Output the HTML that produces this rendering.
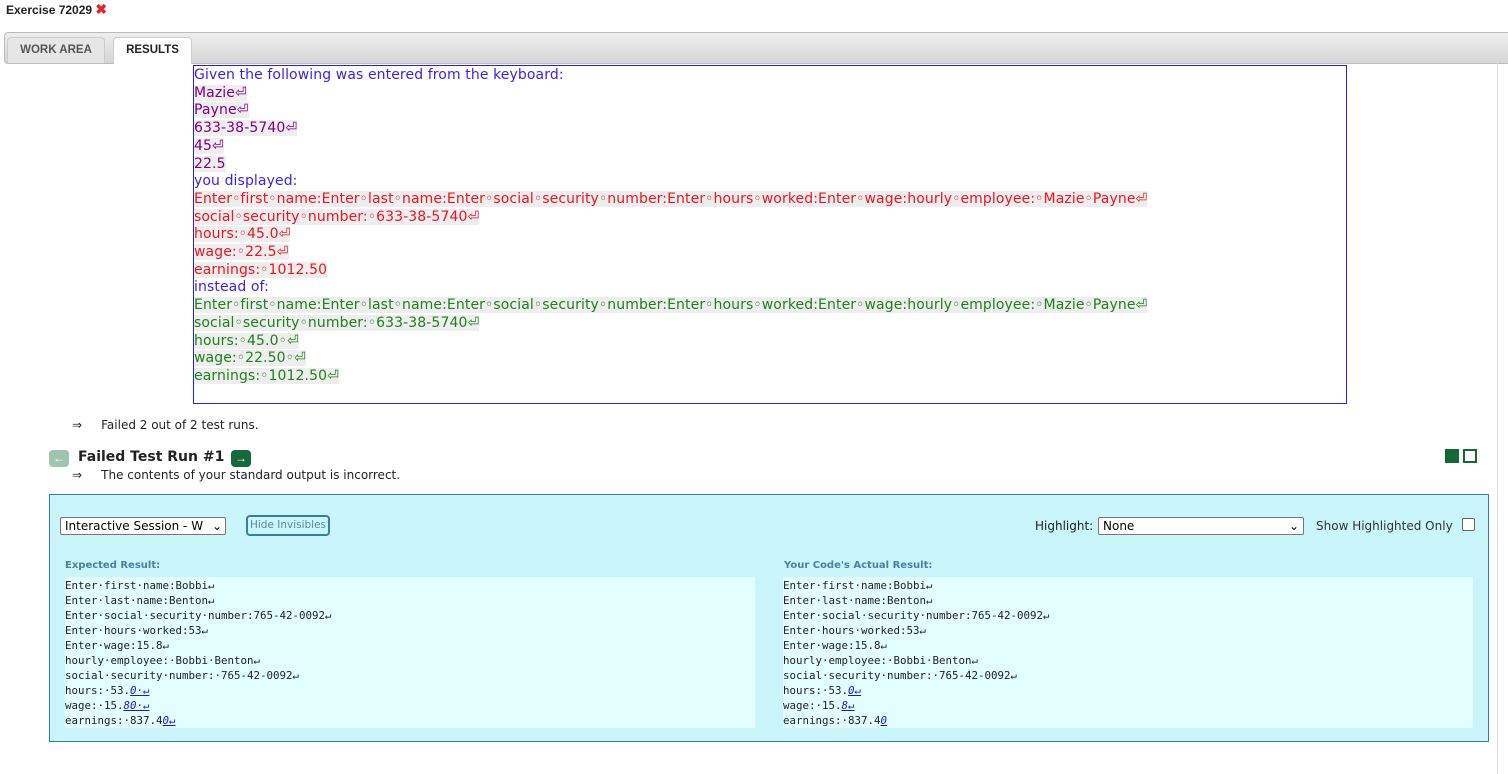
<!DOCTYPE html>
<html><head><meta charset="utf-8"><style>
body{margin:0;width:1508px;height:774px;overflow:hidden;background:#fff;font-family:"Liberation Sans",sans-serif;position:relative}
.abs{position:absolute}
.title{left:6px;top:1px;font-size:12px;font-weight:bold;color:#222}
.title span{color:#e0282f;font-size:14px}
.tabbar{left:4px;top:32px;width:1520px;height:30px;border:1px solid #bbb;border-radius:4px;background:linear-gradient(#eee,#d6d6d6)}
.tab{top:37px;height:25px;border:1px solid #ccc;border-bottom:none;border-radius:4px 4px 0 0;font-size:11.5px;font-weight:bold;line-height:25px;text-align:center}
.box{left:193px;top:65px;width:1152px;height:336px;border:1px solid #2222ee;font-family:"DejaVu Sans",sans-serif;font-size:14px;letter-spacing:0.1px;line-height:17.7px;white-space:pre;padding-top:1px}
.g{background:#eee}
.b{color:#3a1ef0}.p{color:#800080}.r{color:#f0141e}.gr{color:#22801e}
.small{font-family:"DejaVu Sans",sans-serif;font-size:12px;color:#222}
.btn{width:20px;height:17px;border-radius:4px;color:#fff;font-size:12px;text-align:center;line-height:17px;font-weight:bold}
.panel{left:49px;top:494px;width:1438px;height:246px;border:1px solid #3a7ca8;background:#c9f5fb}
.sel{border:1px solid #777;background:#fff;border-radius:2px;font-family:"DejaVu Sans",sans-serif;font-size:12px;height:18px;line-height:17px;padding-left:4px;box-sizing:border-box}
.lbl{font-family:"DejaVu Sans",sans-serif;font-size:10px;font-weight:bold;color:#4c7fa0}
.code{background:#e3feff;font-family:"DejaVu Sans Mono",monospace;font-size:10.8px;line-height:15px;white-space:pre;color:#222;padding-top:1px}
.code u{color:#1818d0;font-style:italic;text-decoration-color:#1818d0}
</style></head><body>
<div class="abs title">Exercise 72029 <span>✖</span></div>
<div class="abs tabbar"></div>
<div class="abs tab" style="left:7px;width:96px;background:#e6e6e6;color:#555">WORK AREA</div>
<div class="abs tab" style="left:113px;width:77px;background:#fff;color:#222;height:26px">RESULTS</div>
<div class="abs" style="left:1497px;top:62px;width:1px;height:712px;background:#ddd"></div>
<div class="abs box"><span class="b">Given the following was entered from the keyboard:</span>
<span class="p g">Mazie⏎</span>
<span class="p g">Payne⏎</span>
<span class="p g">633-38-5740⏎</span>
<span class="p g">45⏎</span>
<span class="p g">22.5</span>
<span class="b">you displayed:</span>
<span class="r g">Enter◦first◦name:Enter◦last◦name:Enter◦social◦security◦number:Enter◦hours◦worked:Enter◦wage:hourly◦employee:◦Mazie◦Payne⏎</span>
<span class="r g">social◦security◦number:◦633-38-5740⏎</span>
<span class="r g">hours:◦45.0⏎</span>
<span class="r g">wage:◦22.5⏎</span>
<span class="r g">earnings:◦1012.50</span>
<span class="b">instead of:</span>
<span class="gr g">Enter◦first◦name:Enter◦last◦name:Enter◦social◦security◦number:Enter◦hours◦worked:Enter◦wage:hourly◦employee:◦Mazie◦Payne⏎</span>
<span class="gr g">social◦security◦number:◦633-38-5740⏎</span>
<span class="gr g">hours:◦45.0◦⏎</span>
<span class="gr g">wage:◦22.50◦⏎</span>
<span class="gr g">earnings:◦1012.50⏎</span></div>
<div class="abs small" style="left:72px;top:418px">⇒&nbsp;&nbsp;&nbsp;&nbsp;&nbsp;Failed 2 out of 2 test runs.</div>
<div class="abs btn" style="left:49px;top:450px;background:#9fc4b0">←</div>
<div class="abs" style="left:78px;top:449px;font-family:'DejaVu Sans',sans-serif;font-weight:bold;font-size:14px;color:#222">Failed Test Run #1</div>
<div class="abs btn" style="left:231px;top:450px;background:#17683a">→</div>
<div class="abs" style="left:1445px;top:449px;width:14px;height:14px;background:#0f6a36"></div>
<div class="abs" style="left:1463px;top:449px;width:10px;height:10px;border:2px solid #0f6a36"></div>
<div class="abs small" style="left:72px;top:468px">⇒&nbsp;&nbsp;&nbsp;&nbsp;&nbsp;The contents of your standard output is incorrect.</div>
<div class="abs panel"></div>
<div class="abs sel" style="left:60px;top:517px;width:166px">Interactive Session - W <span style="position:absolute;right:3px">⌄</span></div>
<div class="abs" style="left:246px;top:515px;width:84px;height:21px;border:2px solid #3a7ca8;border-radius:4px;box-sizing:border-box;font-family:'DejaVu Sans',sans-serif;font-size:10.5px;color:#5a8aa8;line-height:17px;text-align:center">Hide Invisibles</div>
<div class="abs" style="left:1035px;top:519px;font-family:'DejaVu Sans',sans-serif;font-size:12px;color:#222">Highlight:</div>
<div class="abs sel" style="left:1098px;top:517px;width:206px">None<span style="position:absolute;right:4px">⌄</span></div>
<div class="abs" style="left:1316px;top:519px;font-family:'DejaVu Sans',sans-serif;font-size:12px;color:#333">Show Highlighted Only</div>
<div class="abs" style="left:1462px;top:518px;width:11px;height:11px;border:1px solid #666;border-radius:2px;background:#fff"></div>
<div class="abs lbl" style="left:65px;top:560px">Expected Result:</div>
<div class="abs lbl" style="left:784px;top:560px">Your Code's Actual Result:</div>
<div class="abs code" style="left:65px;top:577px;width:690px;height:150px">Enter·first·name:Bobbi↵
Enter·last·name:Benton↵
Enter·social·security·number:765-42-0092↵
Enter·hours·worked:53↵
Enter·wage:15.8↵
hourly·employee:·Bobbi·Benton↵
social·security·number:·765-42-0092↵
hours:·53.<u>0·↵</u>
wage:·15.<u>80·↵</u>
earnings:·837.4<u>0↵</u></div>
<div class="abs code" style="left:783px;top:577px;width:690px;height:150px">Enter·first·name:Bobbi↵
Enter·last·name:Benton↵
Enter·social·security·number:765-42-0092↵
Enter·hours·worked:53↵
Enter·wage:15.8↵
hourly·employee:·Bobbi·Benton↵
social·security·number:·765-42-0092↵
hours:·53.<u>0↵</u>
wage:·15.<u>8↵</u>
earnings:·837.4<u>0</u></div>
</body></html>
